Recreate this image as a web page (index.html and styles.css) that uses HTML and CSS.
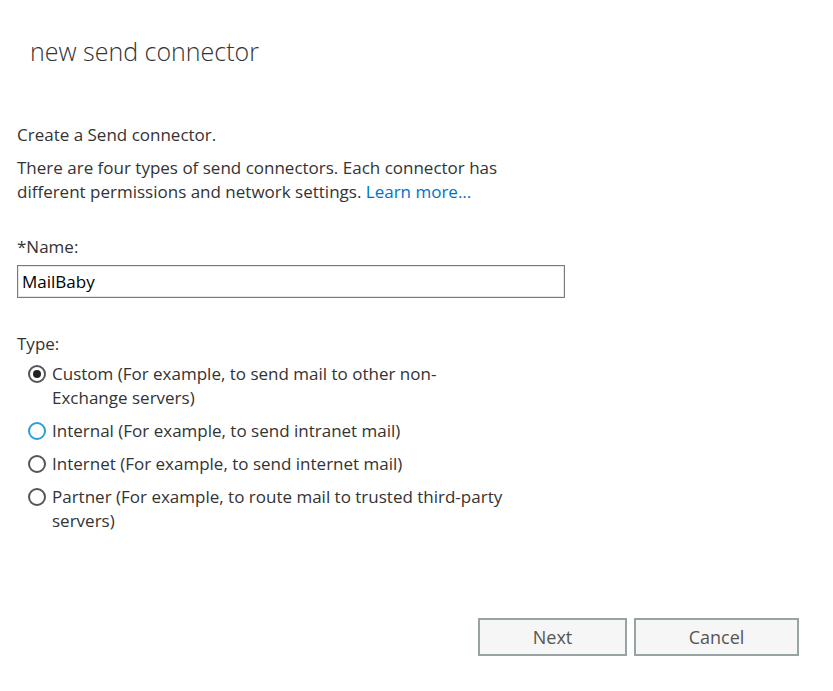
FILE: index.html
```
<!doctype html>
<html lang="en">
<head>
	<meta charset="UTF-8">
	<title>new send connector</title>
	<link rel="stylesheet" href="styles.css">
</head>
<body>
<div class="dialog">
	<h1 class="title">new send connector</h1>

	<div class="content">
		<p class="intro">Create a Send connector.</p>
		<p class="desc">There are four types of send connectors. Each connector has<br>different permissions and network settings. <a href="#">Learn more...</a></p>

		<div class="field">
			<label for="name">*Name:</label>
			<input type="text" name="name" id="name" value="MailBaby">
		</div>

		<div class="field types">
			<div class="label">Type:</div>
			<label class="radio">
				<input type="radio" name="type" value="custom" checked>
				<span class="dot"></span>
				<span>Custom (For example, to send mail to other non-<br>Exchange servers)</span>
			</label>
			<label class="radio focus">
				<input type="radio" name="type" value="internal">
				<span class="dot"></span>
				<span>Internal (For example, to send intranet mail)</span>
			</label>
			<label class="radio">
				<input type="radio" name="type" value="internet">
				<span class="dot"></span>
				<span>Internet (For example, to send internet mail)</span>
			</label>
			<label class="radio">
				<input type="radio" name="type" value="partner">
				<span class="dot"></span>
				<span>Partner (For example, to route mail to trusted third-party<br>servers)</span>
			</label>
		</div>
	</div>

	<div class="buttons">
		<button type="button" class="button">Next</button>
		<button type="button" class="button cancel">Cancel</button>
	</div>
</div>
</body>
</html>
```

FILE: styles.css
```
body{
	margin: 0;
	font-family: "Open Sans", "Noto Sans", sans-serif;
	font-size: 17px;
	color: #333;
	background: #fff;
}
.dialog{
	width: 833px;
	height: 691px;
	box-sizing: border-box;
	padding: 34px 0 0 0;
}
.title{
	margin: 0 0 0 30px;
	font-size: 25px;
	font-weight: 300;
	line-height: 34px;
	color: #333;
}
.content{
	padding: 0 0 0 17px;
	margin-top: 55px;
}
p{
	margin: 0;
	line-height: 24px;
}
.desc{
	margin-top: 9px;
}
a{
	color: #0072c6;
	text-decoration: none;
}
.field{
	margin-top: 31px;
}
.field label, .label{
	display: block;
	line-height: 24px;
}
input[type='text']{
	display: block;
	width: 548px;
	height: 33px;
	box-sizing: border-box;
	margin-top: 6px;
	padding: 0 4px;
	border: 1px solid #7a7a7a;
	box-shadow: inset 0 0 0 1px #e6e6e6;
	font-family: inherit;
	font-size: 17px;
	color: #000;
	outline: none;
}
.types{
	margin-top: 34px;
}
.radio{
	display: flex !important;
	align-items: flex-start;
	margin: 9px 0 0 11px;
}
.label + .radio{
	margin-top: 6px;
}
.radio input{
	display: none;
}
.dot{
	flex: none;
	width: 18px;
	height: 18px;
	box-sizing: border-box;
	margin: 3px 6px 0 0;
	border: 2px solid #555;
	border-radius: 50%;
	position: relative;
}
.radio input:checked + .dot::after{
	content: "";
	position: absolute;
	left: 3px;
	top: 3px;
	width: 8px;
	height: 8px;
	border-radius: 50%;
	background: #222;
}
.radio.focus .dot{
	border-color: #2a9fd8;
}
.buttons{
	display: flex;
	justify-content: flex-end;
	gap: 7px;
	margin: 85px 34px 0 0;
}
.button{
	width: 149px;
	height: 38px;
	border: 2px solid #98a3a3;
	background: #f6f6f6;
	font-family: inherit;
	font-size: 18px;
	color: #555;
}
.cancel{
	width: 165px;
}
```
